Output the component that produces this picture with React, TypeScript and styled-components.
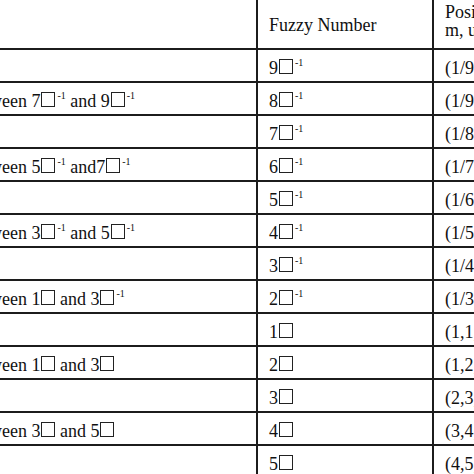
import React from 'react';
import styled, { createGlobalStyle } from 'styled-components';

const GlobalStyle = createGlobalStyle`
  html, body {
    margin: 0;
    padding: 0;
    background: #fff;
  }
`;

const Page = styled.div`
  width: 474px;
  height: 474px;
  overflow: hidden;
  background: #fff;
  font-family: 'Liberation Serif', 'Times New Roman', serif;
  font-size: 18px;
  color: #111;
`;

const Table = styled.div`
  width: 850px;
  margin-left: -183px;
`;

const Row = styled.div<{ $head?: boolean }>`
  display: grid;
  grid-template-columns: 439px 176px 235px;
  height: ${props => (props.$head ? '48px' : '31px')};
  border-bottom: 2px solid #1c1c1c;
`;

const Cell = styled.div<{ $first?: boolean }>`
  display: flex;
  align-items: center;
  padding: 5px 11px 0 11px;
  white-space: nowrap;
  overflow: hidden;
  border-left: ${props => (props.$first ? 'none' : '2px solid #1c1c1c')};
`;

const HeadCell = styled(Cell)`
  padding-top: 2px;
`;

const StackCell = styled(Cell)`
  flex-direction: column;
  align-items: flex-start;
  justify-content: flex-start;
  padding-top: 3px;
  line-height: 18px;
`;

const Box = styled.span`
  display: inline-block;
  width: 12px;
  height: 13px;
  margin-left: 1px;
  border: 1.6px solid #222;
`;

const Sup = styled.span`
  font-size: 10px;
  vertical-align: 8px;
  margin-left: 2px;
`;

const Fuzzy: React.FC<{ n: number; inv?: boolean }> = ({ n, inv }) => (
  <span>
    {n}
    <Box />
    {inv && <Sup>-1</Sup>}
  </span>
);

interface Item {
  label: React.ReactNode;
  n: number;
  inv: boolean;
  tfn: string;
}

const rows: Item[] = [
  { label: 'Extremely less', n: 9, inv: true, tfn: '(1/9, 1/9, 1/9)' },
  {
    label: (
      <>
        Intermediate value between <Fuzzy n={7} inv /> and <Fuzzy n={9} inv />
      </>
    ),
    n: 8,
    inv: true,
    tfn: '(1/9, 1/8, 1/7)',
  },
  { label: 'Very strongly less', n: 7, inv: true, tfn: '(1/8, 1/7, 1/6)' },
  {
    label: (
      <>
        Intermediate value between <Fuzzy n={5} inv /> and<Fuzzy n={7} inv />
      </>
    ),
    n: 6,
    inv: true,
    tfn: '(1/7, 1/6, 1/5)',
  },
  { label: 'Strongly less', n: 5, inv: true, tfn: '(1/6, 1/5, 1/4)' },
  {
    label: (
      <>
        Intermediate value between <Fuzzy n={3} inv /> and <Fuzzy n={5} inv />
      </>
    ),
    n: 4,
    inv: true,
    tfn: '(1/5, 1/4, 1/3)',
  },
  { label: 'Moderately less', n: 3, inv: true, tfn: '(1/4, 1/3, 1/2)' },
  {
    label: (
      <>
        Intermediate value between <Fuzzy n={1} /> and <Fuzzy n={3} inv />
      </>
    ),
    n: 2,
    inv: true,
    tfn: '(1/3, 1/2, 1)',
  },
  { label: 'Equally', n: 1, inv: false, tfn: '(1,1,1)' },
  {
    label: (
      <>
        Intermediate value between <Fuzzy n={1} /> and <Fuzzy n={3} />
      </>
    ),
    n: 2,
    inv: false,
    tfn: '(1,2,3)',
  },
  { label: 'Moderately', n: 3, inv: false, tfn: '(2,3,4)' },
  {
    label: (
      <>
        Intermediate value between <Fuzzy n={3} /> and <Fuzzy n={5} />
      </>
    ),
    n: 4,
    inv: false,
    tfn: '(3,4,5)',
  },
  { label: 'Strongly', n: 5, inv: false, tfn: '(4,5,6)' },
];

export default function App() {
  return (
    <Page>
      <GlobalStyle />
      <Table>
        <Row $head>
          <HeadCell $first>Linguistic variable</HeadCell>
          <HeadCell>Fuzzy Number</HeadCell>
          <StackCell>
            <span>Positive triangular fuzzy (l,</span>
            <span>m, u)</span>
          </StackCell>
        </Row>
        {rows.map((r, i) => (
          <Row key={i}>
            <Cell $first>
              <span>{r.label}</span>
            </Cell>
            <Cell>
              <Fuzzy n={r.n} inv={r.inv} />
            </Cell>
            <Cell>{r.tfn}</Cell>
          </Row>
        ))}
      </Table>
    </Page>
  );
}
